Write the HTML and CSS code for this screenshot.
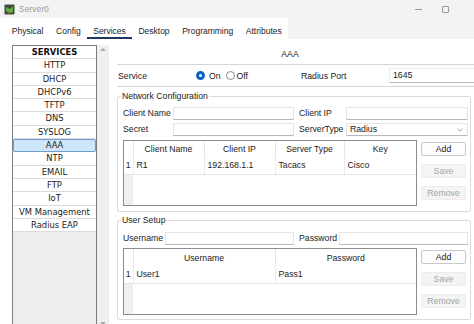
FILE: index.html
```html
<!DOCTYPE html>
<html lang="en">
<head>
    <meta charset="UTF-8">
    <title>Server0</title>
    <link rel="stylesheet" href="styles.css">
</head>
<body>
    <div class="titlebar">
        <svg class="app-icon" viewBox="0 0 11 11">
            <rect x="0.5" y="0.5" width="10" height="10" rx="1" fill="#3f4b3c"/>
            <path d="M2 3 L6 5 L9 2 L9 8 L6 9 L2 7 Z" fill="#5fae3e"/>
            <path d="M3 8 L6 10 L4 10 Z" fill="#d2382e"/>
        </svg>
        <span class="title">Server0</span>
        <span class="winctl"><span class="minimize"></span></span>
        <span class="winctl"><span class="maximize"></span></span>
    </div>

    <div class="tabbar">
        <div class="tabs">
            <span class="tab">Physical</span>
            <span class="tab">Config</span>
            <span class="tab active">Services</span>
            <span class="tab">Desktop</span>
            <span class="tab">Programming</span>
            <span class="tab">Attributes</span>
        </div>
    </div>

    <div class="main">
        <div class="sidebar">
            <div class="svc-list">
                <div class="svc head">SERVICES</div>
                <div class="svc">HTTP</div>
                <div class="svc">DHCP</div>
                <div class="svc">DHCPv6</div>
                <div class="svc">TFTP</div>
                <div class="svc">DNS</div>
                <div class="svc">SYSLOG</div>
                <div class="svc selected">AAA</div>
                <div class="svc">NTP</div>
                <div class="svc">EMAIL</div>
                <div class="svc">FTP</div>
                <div class="svc">IoT</div>
                <div class="svc">VM Management</div>
                <div class="svc">Radius EAP</div>
            </div>
            <div class="scrollbar">
                <span class="arrow up"></span>
                <span class="arrow down"></span>
            </div>
        </div>

        <div class="content">
            <div class="panel-title">AAA</div>

            <div class="service-row">
                <span>Service</span>
                <span class="radio-group">
                    <span class="radio on"></span><span>On</span>
                    <span class="radio off"></span><span>Off</span>
                </span>
                <span>Radius Port</span>
                <span class="field port">1645</span>
            </div>

            <fieldset class="group">
                <legend>Network Configuration</legend>
                <div class="form-grid net">
                    <label>Client Name</label>
                    <span class="field"></span>
                    <label class="pad">Client IP</label>
                    <span class="field"></span>
                    <label>Secret</label>
                    <span class="field"></span>
                    <label class="pad">ServerType</label>
                    <span class="field select">Radius
                        <svg class="chevron" viewBox="0 0 6 4"><path d="M0.5 0.8 L3 3.2 L5.5 0.8" fill="none" stroke="#8a8a8a" stroke-width="0.8"/></svg>
                    </span>
                </div>

                <div class="table-row">
                    <div class="grid-table">
                        <table>
                            <colgroup>
                                <col class="c-num"><col style="width:71px"><col style="width:71px"><col style="width:69px"><col>
                            </colgroup>
                            <tr class="hdr">
                                <th></th><th>Client Name</th><th>Client IP</th><th>Server Type</th><th>Key</th>
                            </tr>
                            <tr class="row">
                                <td class="num">1</td><td>R1</td><td>192.168.1.1</td><td>Tacacs</td><td>Cisco</td>
                            </tr>
                        </table>
                    </div>
                    <div class="btn-col">
                        <span class="btn">Add</span>
                        <span class="btn disabled">Save</span>
                        <span class="btn disabled">Remove</span>
                    </div>
                </div>
            </fieldset>

            <fieldset class="group users">
                <legend>User Setup</legend>
                <div class="form-grid user">
                    <label>Username</label>
                    <span class="field"></span>
                    <label class="pad">Password</label>
                    <span class="field"></span>
                </div>

                <div class="table-row">
                    <div class="grid-table tall">
                        <table>
                            <colgroup>
                                <col class="c-num"><col style="width:142px"><col>
                            </colgroup>
                            <tr class="hdr">
                                <th></th><th>Username</th><th>Password</th>
                            </tr>
                            <tr class="row">
                                <td class="num">1</td><td>User1</td><td>Pass1</td>
                            </tr>
                        </table>
                    </div>
                    <div class="btn-col">
                        <span class="btn">Add</span>
                        <span class="btn disabled">Save</span>
                        <span class="btn disabled">Remove</span>
                    </div>
                </div>
            </fieldset>
        </div>
    </div>
</body>
</html>
```

FILE: styles.css
```css
* {
    box-sizing: border-box;
}
body {
    margin: 0;
    width: 474px;
    height: 324px;
    overflow: hidden;
    background: #fff;
    font-family: "Liberation Sans", Arial, sans-serif;
    font-size: 8.7px;
    color: #1b1b1b;
}

/* title bar */
.titlebar {
    height: 18px;
    background: #f3f3f3;
    display: flex;
    align-items: center;
    padding: 0 15px 0 4px;
}
.app-icon {
    width: 11px;
    height: 11px;
    margin-right: 4px;
}
.title {
    flex: 1;
    color: #9b9b9b;
    font-size: 8.5px;
}
.winctl {
    width: 27px;
    height: 18px;
    display: flex;
    align-items: center;
    justify-content: center;
}
.minimize {
    width: 7px;
    border-top: 1px solid #9a9a9a;
}
.maximize {
    width: 7px;
    height: 7px;
    border: 1px solid #9a9a9a;
    border-radius: 1px;
}

/* tabs */
.tabbar {
    height: 21px;
    background: #f3f3f3;
}
.tabs {
    display: inline-flex;
    height: 21px;
    background: #fff;
    padding-left: 5.5px;
}
.tab {
    padding: 8px 6.3px 0;
    line-height: 11px;
    font-size: 8.5px;
    border-bottom: 2px solid transparent;
}
.tab.active {
    border-bottom-color: #1f3763;
}

.main {
    display: flex;
    height: 285px;
}

/* services list */
.sidebar {
    flex: none;
    width: 115px;
    padding: 6px 0 0 12px;
    display: flex;
    align-items: flex-start;
}
.svc-list {
    width: 85px;
    height: 285px;
    border: 1px solid #7d7d7d;
    background: #ededed;
    font-family: "DejaVu Sans", Verdana, sans-serif;
    font-size: 8.4px;
    text-align: center;
}
.svc {
    height: 13.3px;
    line-height: 12px;
    background: #fff;
    border-bottom: 1.3px solid #dcdcdc;
    color: #222;
}
.svc.head {
    font-weight: bold;
    color: #111;
}
.svc.selected {
    background: #cde6fa;
    border: 1px solid #6f9dcf;
    border-radius: 2px;
    line-height: 11px;
}
.scrollbar {
    width: 12px;
    height: 282px;
    background: #f0f0f0;
    position: relative;
}
.arrow {
    position: absolute;
    left: 3px;
    border-left: 3px solid transparent;
    border-right: 3px solid transparent;
}
.arrow.up {
    top: 3px;
    border-bottom: 3px solid #a8a8a8;
}
.arrow.down {
    bottom: 2px;
    border-top: 3px solid #a8a8a8;
}

/* right panel */
.content {
    flex: 1;
    min-width: 0;
    overflow: hidden;
    padding: 5px 0 0 2px;
}
.panel-title {
    height: 21px;
    line-height: 20px;
    border-bottom: 1px solid #d5d5d5;
    text-align: center;
    padding-right: 11px;
}
.service-row {
    display: grid;
    grid-template-columns: 78px 105px 88px 90px;
    align-items: center;
    height: 22px;
    border-bottom: 1px solid #d5d5d5;
    padding-left: 1px;
}
.radio-group {
    display: flex;
    align-items: center;
}
.radio {
    width: 9px;
    height: 9px;
    border-radius: 50%;
    border: 1px solid #8a8a8a;
    background: #fff;
    margin-right: 3px;
}
.radio.on {
    border: 3px solid #0b63c4;
    margin-right: 4px;
}
.radio.off {
    margin-left: 5px;
    margin-right: 2px;
}
.field {
    display: block;
    height: 13px;
    border: 1px solid #e4e4e4;
    border-bottom-color: #b8b8b8;
    background: #fff;
    line-height: 11px;
    padding-left: 3px;
}
.field.port {
    height: 15px;
    line-height: 13px;
    border-color: #ececec;
    border-bottom-color: #b8b8b8;
}
.field.select {
    display: flex;
    align-items: center;
    justify-content: space-between;
    padding-right: 4px;
}
.chevron {
    width: 6px;
    height: 4px;
}

/* group boxes */
.group {
    margin: 4px 3px 0 0;
    padding: 5px 4px 5px 5px;
    border: 1px solid #dcdcdc;
    border-radius: 2px;
    min-width: 0;
}
.group.users {
    margin-top: 3px;
    padding: 6px 4px 4px 5px;
}
.group legend {
    padding: 0 1px;
    margin-left: -2px;
    line-height: 11px;
}
.form-grid {
    display: grid;
    row-gap: 3px;
    align-items: center;
}
.form-grid.net {
    grid-template-columns: 50px 121px 52px 122px;
}
.form-grid.user {
    grid-template-columns: 42px 129px 45px 129px;
}
.form-grid label {
    line-height: 13px;
}
.form-grid .pad {
    padding-left: 5px;
}

/* tables */
.table-row {
    display: flex;
    gap: 4px;
    margin-top: 4px;
}
.users .table-row {
    margin-top: 3px;
}
.grid-table {
    width: 294px;
    height: 66px;
    border: 1px solid #8c8c8c;
    background: linear-gradient(to right, #efefef 9px, #fff 9px);
}
.grid-table.tall {
    height: 67px;
}
.grid-table table {
    width: 100%;
    table-layout: fixed;
    border-collapse: collapse;
    font-size: 8.7px;
}
.c-num {
    width: 9px;
}
.grid-table th {
    font-weight: normal;
    height: 15px;
    padding: 0;
    background: #fff;
    border-right: 1px solid #e6e6e6;
    text-align: center;
}
.grid-table.tall th {
    height: 17px;
}
.grid-table th:last-child,
.grid-table td:last-child {
    border-right: none;
}
.grid-table td {
    height: 18px;
    padding: 0 0 0 3px;
    background: #fff;
    border-right: 1px solid #ececec;
    border-bottom: 1px solid #e4e4e4;
    white-space: nowrap;
}
.grid-table.tall td {
    height: 17px;
}
.grid-table td.num {
    padding: 0;
    text-align: center;
}
.btn-col {
    display: flex;
    flex-direction: column;
    gap: 8px;
    padding-top: 2px;
}
.btn {
    width: 45px;
    height: 14px;
    line-height: 12px;
    text-align: center;
    background: #fdfdfd;
    border: 1px solid #c9c9c9;
    border-radius: 2px;
}
.btn.disabled {
    background: #f4f4f4;
    border-color: #ededed;
    color: #a6a6a6;
}
```
